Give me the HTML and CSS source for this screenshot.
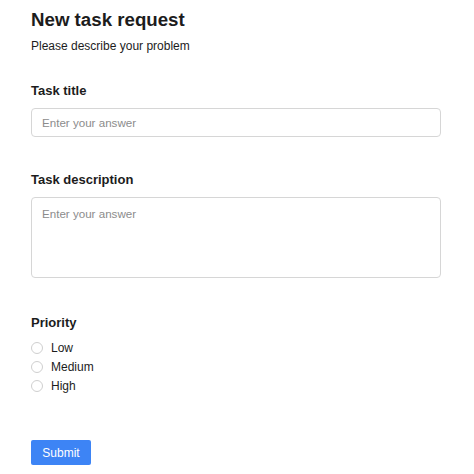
FILE: index.html
```html
<!DOCTYPE html>
<html lang="en">
<head>
    <meta charset="UTF-8">
    <title>New task request</title>
    <link rel="stylesheet" href="styles.css">
</head>
<body>
    <form class="task-form">
        <h1>New task request</h1>
        <p class="subtitle">Please describe your problem</p>

        <div class="field">
            <label class="field-label" for="title">Task title</label>
            <input type="text" id="title" placeholder="Enter your answer">
        </div>

        <div class="field">
            <label class="field-label" for="desc">Task description</label>
            <textarea id="desc" placeholder="Enter your answer"></textarea>
        </div>

        <div class="field field-priority">
            <span class="field-label">Priority</span>
            <div class="options">
                <label class="option"><input type="radio" name="priority"><span>Low</span></label>
                <label class="option"><input type="radio" name="priority"><span>Medium</span></label>
                <label class="option"><input type="radio" name="priority"><span>High</span></label>
            </div>
        </div>

        <button type="submit" class="submit">Submit</button>
    </form>
</body>
</html>
```

FILE: styles.css
```css
body {
    margin: 0;
    background: #fff;
    color: #1c1c1c;
    font-family: "Liberation Sans", Arial, sans-serif;
}
.task-form {
    display: flex;
    flex-direction: column;
    padding: 8px 33px 0 31px;
}
h1 {
    margin: 0;
    font-size: 18.7px;
    font-weight: 700;
    line-height: 24px;
}
.subtitle {
    margin: 6px 0 0;
    font-size: 12px;
    line-height: 16px;
}
.field {
    display: flex;
    flex-direction: column;
    margin-top: 28px;
}
.field + .field {
    margin-top: 34px;
}
.field + .field-priority {
    margin-top: 36px;
}
.field-label {
    font-size: 13px;
    font-weight: 700;
    line-height: 18px;
    margin-bottom: 8px;
}
input[type="text"],
textarea {
    box-sizing: border-box;
    width: 100%;
    margin: 0;
    border: 1px solid #d6d6d6;
    border-radius: 4px;
    font-family: inherit;
    font-size: 11.6px;
    color: #1c1c1c;
    padding: 0 10px;
}
input[type="text"] {
    height: 29px;
}
textarea {
    display: block;
    height: 81px;
    padding-top: 8px;
    line-height: 16px;
    resize: none;
}
::placeholder {
    color: #8c8c8c;
}
.options {
    display: flex;
    flex-direction: column;
    gap: 3px;
}
.option {
    display: flex;
    align-items: center;
    gap: 8px;
    font-size: 12px;
    line-height: 16px;
}
.option input {
    appearance: none;
    margin: 0;
    width: 12px;
    height: 12px;
    border: 1px solid #cfcfcf;
    border-radius: 50%;
}
.submit {
    align-self: flex-start;
    margin-top: 46px;
    width: 60px;
    height: 25px;
    border: none;
    border-radius: 2px;
    background: #3d84f5;
    color: #fff;
    font-family: inherit;
    font-size: 12px;
}
```
